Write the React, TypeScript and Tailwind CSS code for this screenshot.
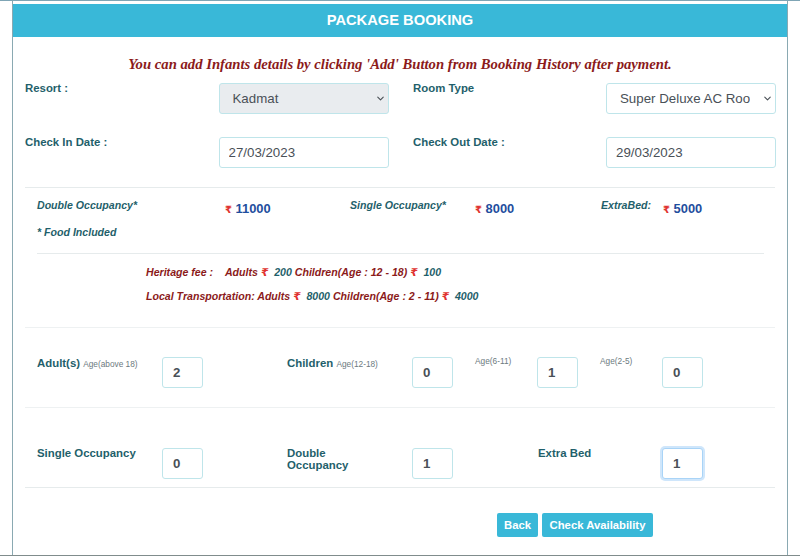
import React from "react";
import { ChevronDown } from "lucide-react";

const sans = "[font-family:'Liberation_Sans',Arial,sans-serif]";
const Rs = ({ className = "" }: { className?: string }) => (
  <span className={`text-[#e0332f] [font-family:'DejaVu_Sans',sans-serif] ${className}`}>₹</span>
);

const fieldCls =
  "w-[170px] h-[31px] rounded-[3px] border border-[#bfe5ea] text-[13.3px] text-[#495057] outline-none";

function Num({ value, focus }: { value: string; focus?: boolean }) {
  return (
    <input
      readOnly
      value={value}
      className={`w-[41px] h-[31px] rounded-[3px] border pl-[10px] text-[13.3px] font-bold text-[#495057] bg-white outline-none ${
        focus ? "border-[#a9d4f7] shadow-[0_0_0_2px_#cfe6fb]" : "border-[#bfe5ea]"
      }`}
    />
  );
}

function Sel({ value, disabled }: { value: string; disabled?: boolean }) {
  return (
    <div className="relative w-[170px] h-[31px]">
      <select
        disabled={disabled}
        className={`${fieldCls} appearance-none pl-[13px] pr-[25px] opacity-100 ${disabled ? "bg-[#e9ecef]" : "bg-white"}`}
      >
        <option>{value}</option>
      </select>
      <ChevronDown size={11} strokeWidth={2.4} className="absolute right-[3px] top-[10px] text-[#4a5056] pointer-events-none" />
    </div>
  );
}

const Label = ({ children }: { children: React.ReactNode }) => (
  <div className="text-[11.4px] leading-[12px] font-bold text-[#1f5f6b]">{children}</div>
);

const Small = ({ children }: { children: React.ReactNode }) => (
  <span className="text-[8.3px] font-normal text-[#6c7a80]">{children}</span>
);

const Price = ({ children }: { children: React.ReactNode }) => (
  <div className="not-italic pt-[3px] text-[12.9px] leading-[14px] text-[#1f4e9e] whitespace-nowrap">
    <Rs className="text-[10px]" /> {children}
  </div>
);

export default function App() {
  return (
    <div className={`w-[800px] h-[556px] bg-white overflow-hidden border-y border-t-[#7fa5b5] border-b-[#808c8c] ${sans}`}>
      <div className="mx-[12px] h-[554px] border-x border-[#8aa9b2] pt-[3px] box-border">
        <div className="h-[33px] bg-[#39b8d8] flex items-center justify-center text-[14.7px] font-bold text-white">
          PACKAGE BOOKING
        </div>
        <div className="h-[46px] pt-[18px] text-center text-[14.7px] leading-[18px] font-bold italic text-[#8b1a1a] [font-family:'Liberation_Serif',serif]">
          You can add Infants details by clicking 'Add' Button from Booking History after payment.
        </div>
        <div className="px-[12px]">
          <div className="grid grid-cols-[193.5px_194.5px_193px_170px] h-[54px]">
            <div className="-mt-[1px]"><Label>Resort :</Label></div>
            <Sel value="Kadmat" disabled />
            <div className="-mt-[1px]"><Label>Room Type</Label></div>
            <Sel value="Super Deluxe AC Room" />
          </div>
          <div className="grid grid-cols-[193.5px_194.5px_193px_170px] h-[50px] items-start">
            <div className="-mt-[1px]"><Label>Check In Date :</Label></div>
            <input readOnly value="27/03/2023" className={`${fieldCls} bg-white pl-[9px]`} />
            <div className="-mt-[1px]"><Label>Check Out Date :</Label></div>
            <input readOnly value="29/03/2023" className={`${fieldCls} bg-white pl-[9px]`} />
          </div>

          <div className="border-t border-[#e6ebec] h-[140px] pl-[12px]">
            <div className="grid grid-cols-[188px_125px_125px_126px_62px_101px] h-[38px] pt-[11px] items-start text-[10.6px] leading-[13px] italic font-bold text-[#1f5f6b]">
              <div>Double Occupancy*</div>
              <Price>11000</Price>
              <div>Single Occupancy*</div>
              <Price>8000</Price>
              <div>ExtraBed:</div>
              <Price>5000</Price>
            </div>
            <div className="h-[28px] text-[10.6px] leading-[13px] italic font-bold text-[#1f5f6b] border-b border-[#e6ebec] w-[727px]">
              * Food Included
            </div>
            <div className="pl-[109px] pt-[6px] text-[10.6px] leading-[24px] italic font-bold text-[#8b1a1a] whitespace-nowrap">
              <div>
                Heritage fee : &nbsp;&nbsp;<span className="ml-[3px]">Adults</span> <Rs /> <span className="text-[#1f5f6b]">&nbsp;200</span> Children(Age : 12 - 18) <Rs /> <span className="text-[#1f5f6b]">&nbsp;100</span>
              </div>
              <div>
                Local Transportation: Adults <Rs /> <span className="text-[#1f5f6b]">&nbsp;8000</span> Children(Age : 2 - 11) <Rs /> <span className="text-[#1f5f6b]">&nbsp;4000</span>
              </div>
            </div>
          </div>

          <div className="border-t border-[#eef1f2] h-[80px] pl-[12px] pt-[29px] grid grid-cols-[125px_125px_125px_63px_62px_63px_62px_44px] items-start">
            <div className="whitespace-nowrap"><Label>Adult(s) <Small>Age(above 18)</Small></Label></div>
            <Num value="2" />
            <div className="whitespace-nowrap"><Label>Children <Small>Age(12-18)</Small></Label></div>
            <Num value="0" />
            <div className="-mt-[3px] leading-[10px]"><Small>Age(6-11)</Small></div>
            <Num value="1" />
            <div className="-mt-[3px] leading-[10px]"><Small>Age(2-5)</Small></div>
            <Num value="0" />
          </div>

          <div className="border-t border-[#eef1f2] h-[80px] pl-[12px] pt-[40px] grid grid-cols-[125px_125px_125px_125px_125px_126px] items-start">
            <div className="-mt-[1px] whitespace-nowrap"><Label>Single Occupancy</Label></div>
            <Num value="0" />
            <div className="-mt-[1px]"><Label>Double<br />Occupancy</Label></div>
            <Num value="1" />
            <div className="-mt-[1px] ml-[1px]"><Label>Extra Bed</Label></div>
            <Num value="1" focus />
          </div>

          <div className="border-t border-[#e6ebec] flex pt-[25px] pl-[472px] gap-[4px]">
            <button className="h-[24px] w-[41px] rounded-[2px] bg-[#39b8d8] text-[11.3px] font-bold text-white">Back</button>
            <button className="h-[24px] w-[111px] rounded-[2px] bg-[#39b8d8] text-[11.3px] font-bold text-white">Check Availability</button>
          </div>
        </div>
      </div>
    </div>
  );
}
